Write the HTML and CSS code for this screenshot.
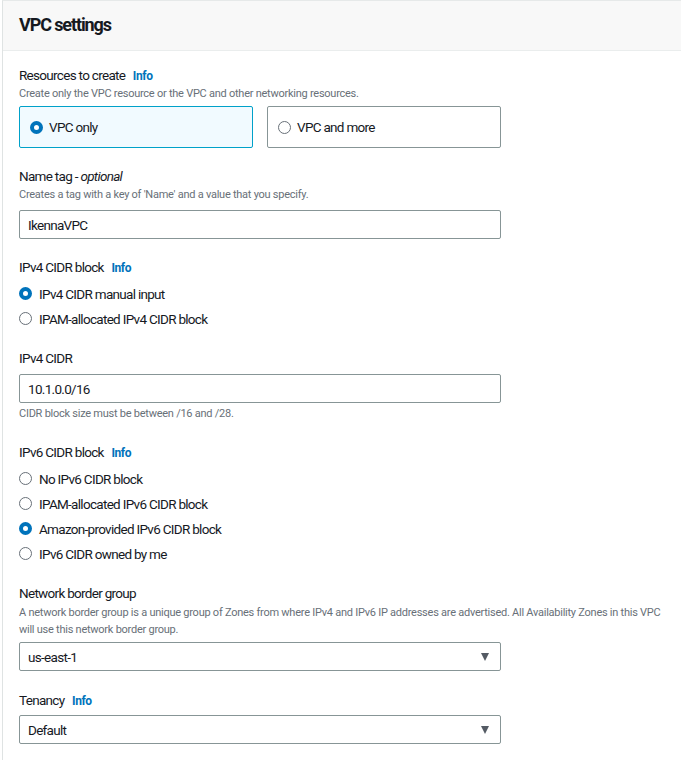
FILE: index.html
```html
<!DOCTYPE html>
<html lang="en">
<head>
<meta charset="utf-8">
<title>VPC settings</title>
<link rel="stylesheet" href="styles.css">
</head>
<body>
<section class="panel">
  <header class="panel-header">
    <h2 class="panel-title">VPC settings</h2>
  </header>
  <div class="panel-body">
    <div class="field f-resources">
      <div class="label">Resources to create <a class="info" href="#">Info</a></div>
      <div class="desc">Create only the VPC resource or the VPC and other networking resources.</div>
      <div class="tiles">
        <div class="tile selected"><span class="radio checked"></span><span>VPC only</span></div>
        <div class="tile"><span class="radio"></span><span>VPC and more</span></div>
      </div>
    </div>

    <div class="field f-name">
      <div class="label">Name tag - <i>optional</i></div>
      <div class="desc">Creates a tag with a key of 'Name' and a value that you specify.</div>
      <div class="input">IkennaVPC</div>
    </div>

    <div class="field f-ipv4block">
      <div class="label">IPv4 CIDR block <a class="info" href="#">Info</a></div>
      <div class="radios">
        <div class="radio-row"><span class="radio checked"></span><span>IPv4 CIDR manual input</span></div>
        <div class="radio-row"><span class="radio"></span><span>IPAM-allocated IPv4 CIDR block</span></div>
      </div>
    </div>

    <div class="field f-ipv4">
      <div class="label">IPv4 CIDR</div>
      <div class="input">10.1.0.0/16</div>
      <div class="help">CIDR block size must be between /16 and /28.</div>
    </div>

    <div class="field f-ipv6block">
      <div class="label">IPv6 CIDR block <a class="info" href="#">Info</a></div>
      <div class="radios">
        <div class="radio-row"><span class="radio"></span><span>No IPv6 CIDR block</span></div>
        <div class="radio-row"><span class="radio"></span><span>IPAM-allocated IPv6 CIDR block</span></div>
        <div class="radio-row"><span class="radio checked"></span><span>Amazon-provided IPv6 CIDR block</span></div>
        <div class="radio-row"><span class="radio"></span><span>IPv6 CIDR owned by me</span></div>
      </div>
    </div>

    <div class="field f-nbg">
      <div class="label">Network border group</div>
      <div class="desc multi">A network border group is a unique group of Zones from where IPv4 and IPv6 IP addresses are advertised. All Availability Zones in this VPC will use this network border group.</div>
      <div class="input select"><span>us-east-1</span><span class="caret"></span></div>
    </div>

    <div class="field f-tenancy">
      <div class="label">Tenancy <a class="info" href="#">Info</a></div>
      <div class="input select"><span>Default</span><span class="caret"></span></div>
    </div>
  </div>
</section>
</body>
</html>
```
FILE: styles.css
```css
* { box-sizing: border-box; }
html, body { margin: 0; padding: 0; background: #ffffff; }
body {
  font-family: Roboto, "Liberation Sans", sans-serif;
  color: #16191f;
  width: 681px;
  height: 760px;
  overflow: hidden;
}
.panel {
  margin-left: 2px;
  border-left: 1px solid #dfe3e3;
  border-top: 1px solid #e6e9e9;
  min-height: 760px;
}
.panel-header {
  background: #f8f8f8;
  border-bottom: 1px solid #eaeded;
  height: 50px;
  display: flex;
  align-items: center;
  padding-left: 16px;
}
.panel-title {
  margin: 0;
  font-size: 18px;
  font-weight: 700;
  letter-spacing: -1.1px;
  padding-bottom: 3px;
}
.panel-body {
  padding: 14px 16px 0 16px;
  width: 500px;
}
.field { margin-bottom: 18px; }
.label {
  font-size: 13.5px;
  line-height: 20px;
  height: 20px;
  letter-spacing: -0.7px;
  white-space: nowrap;
}
.label i { font-style: italic; }
.info {
  color: #0073bb;
  font-weight: 700;
  font-size: 12px;
  line-height: 1;
  text-decoration: none;
  margin-left: 5px;
  letter-spacing: -0.4px;
}
.desc, .help {
  font-size: 11px;
  line-height: 18px;
  color: #687078;
  letter-spacing: -0.25px;
}
.desc.multi { line-height: 17px; width: 650px; margin-top: 1px; }
.help { margin-top: 2px; }
.tiles {
  display: flex;
  gap: 14px;
  margin-top: 3px;
  width: 482px;
}
.tile {
  flex: 1;
  height: 42px;
  border: 1px solid #879596;
  border-radius: 2px;
  display: flex;
  align-items: center;
  padding-left: 10px;
  gap: 6px;
  font-size: 13.5px;
  letter-spacing: -0.7px;
}
.tile.selected {
  background: #f1faff;
  border-color: #00a1c9;
}
.input {
  margin-top: 5px;
  width: 482px;
  height: 29px;
  border: 1px solid #879596;
  border-radius: 2px;
  display: flex;
  align-items: center;
  padding-left: 8px;
  font-size: 13.5px;
  letter-spacing: -0.7px;
}
.select { justify-content: space-between; padding-right: 11px; }
.caret {
  width: 0; height: 0;
  border-left: 4.5px solid transparent;
  border-right: 4.5px solid transparent;
  border-top: 8px solid #545b64;
}
.radios { margin-top: 4px; }
.radio-row {
  height: 25px;
  display: flex;
  align-items: center;
  gap: 7px;
  font-size: 13.5px;
  letter-spacing: -0.7px;
}
.radio {
  width: 13px;
  height: 13px;
  border-radius: 50%;
  border: 1.5px solid #687078;
  background: #fff;
  flex: none;
}
.radio.checked {
  border: 4px solid #0073bb;
}
.f-resources { margin-bottom: 18px; }
.f-name .input { margin-top: 6px; }
.f-ipv4block { margin-bottom: 17px; }
.f-ipv4 .input { margin-top: 6px; }
.f-ipv4 { margin-bottom: 19px; }
.f-ipv6block { margin-bottom: 17px; }
.f-nbg { margin-bottom: 19px; }
.f-nbg .input { margin-top: 4px; }
```
